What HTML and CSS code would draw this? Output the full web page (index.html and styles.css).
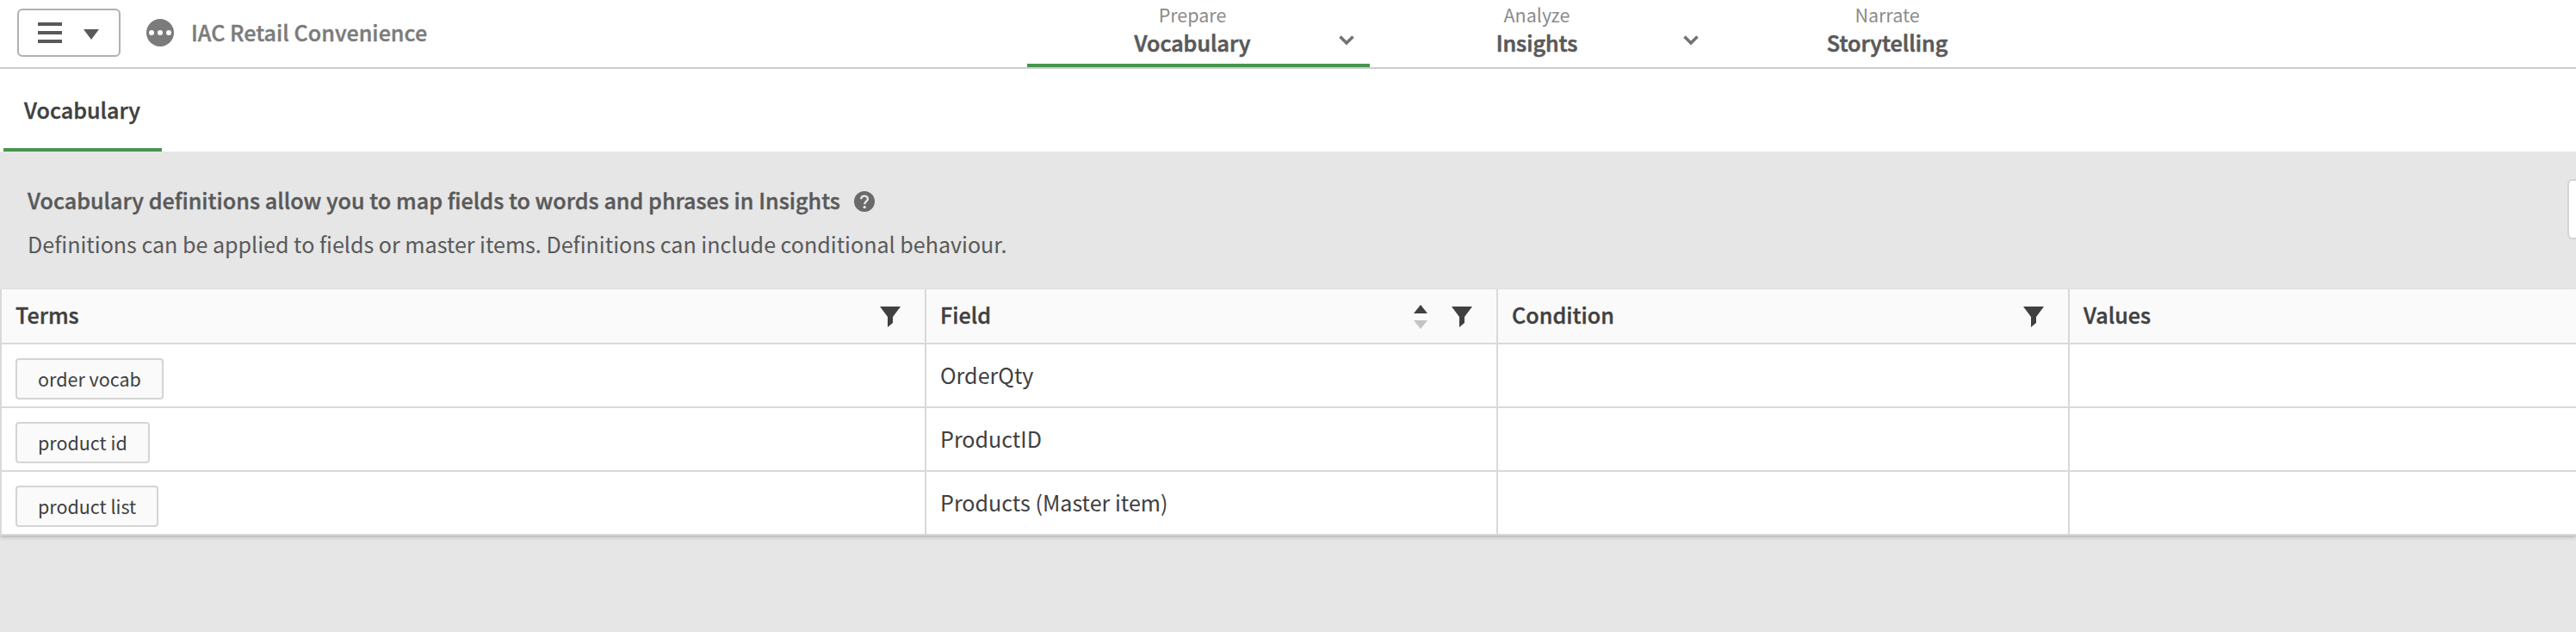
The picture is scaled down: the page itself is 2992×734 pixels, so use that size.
FILE: index.html
```html
<!DOCTYPE html>
<html lang="en">
<head>
    <meta charset="UTF-8">
    <meta name="viewport" content="width=device-width, initial-scale=1.0">
    <title>IAC Retail Convenience - Vocabulary</title>
    <link rel="stylesheet" href="styles.css">
</head>
<body>
    <header class="toolbar">
        <div class="app">
            <button type="button" class="menu-button" aria-label="Menu">
                <svg width="28" height="24" viewBox="0 0 28 24"><path d="M0 0h28v4H0zM0 10h28v4H0zM0 20h28v4H0z"/></svg>
                <svg class="caret" width="18" height="12" viewBox="0 0 18 12"><path d="M0 0h18L9 12z"/></svg>
            </button>
            <svg class="more" width="32" height="32" viewBox="0 0 32 32">
                <circle cx="16" cy="16" r="16" fill="#7b7b7b"/>
                <g fill="#fff"><circle cx="6" cy="16" r="3"/><circle cx="16" cy="16" r="3"/><circle cx="26" cy="16" r="3"/></g>
            </svg>
            <span class="app-name">IAC Retail Convenience</span>
        </div>
        <nav class="nav">
            <a class="nav-item active">
                <span class="nav-text"><small>Prepare</small><b>Vocabulary</b></span>
                <svg class="chevron" width="18" height="12" viewBox="0 0 18 12"><path d="M1.5 1.5L9 9l7.5-7.5"/></svg>
            </a>
            <a class="nav-item">
                <span class="nav-text"><small>Analyze</small><b>Insights</b></span>
                <svg class="chevron" width="18" height="12" viewBox="0 0 18 12"><path d="M1.5 1.5L9 9l7.5-7.5"/></svg>
            </a>
            <a class="nav-item">
                <span class="nav-text"><small>Narrate</small><b>Storytelling</b></span>
            </a>
        </nav>
    </header>

    <div class="tabs">
        <a class="tab">Vocabulary</a>
    </div>

    <section class="intro">
        <div class="intro-text">
            <h1>Vocabulary definitions allow you to map fields to words and phrases in Insights
                <svg class="help" width="24" height="24" viewBox="0 0 24 24">
                    <circle cx="12" cy="12" r="12" fill="#6a6a6a"/>
                    <path d="M8.2 9.3C8.2 4.4 15.9 4.4 15.9 9c0 2.900-3.700 2.900-3.700 6.200" fill="none" stroke="#e6e6e6" stroke-width="2.4"/>
                    <circle cx="12.2" cy="18.6" r="1.7" fill="#e6e6e6"/>
                </svg>
            </h1>
            <p>Definitions can be applied to fields or master items. Definitions can include conditional behaviour.</p>
        </div>
        <button type="button" class="create-button" aria-label="Create"></button>
    </section>

    <div class="grid">
        <div class="row head">
            <div class="cell">
                <span class="label">Terms</span>
                <svg class="filter" width="24" height="24" viewBox="0 0 24 24"><path d="M0 0h24l-9 12v7l-6 5V12z"/></svg>
            </div>
            <div class="cell">
                <span class="label">Field</span>
                <svg class="sort" width="16" height="28" viewBox="0 0 16 28"><path d="M0 10L8 0l8 10z" fill="#404040"/><path d="M0 18h16l-8 10z" fill="#c4c4c4"/></svg>
                <svg class="filter" width="24" height="24" viewBox="0 0 24 24"><path d="M0 0h24l-9 12v7l-6 5V12z"/></svg>
            </div>
            <div class="cell">
                <span class="label">Condition</span>
                <svg class="filter" width="24" height="24" viewBox="0 0 24 24"><path d="M0 0h24l-9 12v7l-6 5V12z"/></svg>
            </div>
            <div class="cell"><span class="label">Values</span></div>
        </div>
        <div class="row">
            <div class="cell"><span class="term">order vocab</span></div>
            <div class="cell">OrderQty</div>
            <div class="cell"></div>
            <div class="cell"></div>
        </div>
        <div class="row">
            <div class="cell"><span class="term">product id</span></div>
            <div class="cell">ProductID</div>
            <div class="cell"></div>
            <div class="cell"></div>
        </div>
        <div class="row">
            <div class="cell"><span class="term">product list</span></div>
            <div class="cell">Products (Master item)</div>
            <div class="cell"></div>
            <div class="cell"></div>
        </div>
    </div>
</body>
</html>
```
FILE: styles.css
```css
* {
    box-sizing: border-box;
}
body {
    margin: 0;
    height: 734px;
    overflow: hidden;
    background-color: #e6e6e6;
    color: #404040;
    font-family: "Source Sans Pro", "Noto Sans CJK SC", sans-serif;
    font-size: 25.1px;
    line-height: 36px;
}
svg {
    display: block;
    flex: none;
}
button {
    background-color: #fff;
    padding: 0;
}
.app-name, .nav-text b, .tab, .intro h1, .head {
    font-weight: 500;
    letter-spacing: 0.03px;
    -webkit-text-stroke: 0.4px;
}
.toolbar {
    display: flex;
    height: 80px;
    background-color: #fff;
    border-bottom: 2px solid #ccc;
}
.app {
    display: flex;
    align-items: flex-start;
    width: 1192px;
    padding: 10px 0 0 20px;
}
.menu-button {
    display: flex;
    gap: 25px;
    width: 120px;
    height: 56px;
    padding: 14px 0 0 22px;
    border: 2px solid #b0b0b0;
    border-radius: 6px;
    fill: #595959;
}
.caret {
    margin-top: 8px;
}
.more {
    margin: 12px 20px 0 30px;
}
.app-name {
    margin-top: 9px;
    color: #7b7b7b;
}
.nav {
    display: flex;
}
.nav-item {
    display: flex;
    width: 400px;
    height: 78px;
}
.nav-item.active {
    background: linear-gradient(#46964f, #46964f) 1px 74px / 398px 4px no-repeat;
}
.nav-text {
    display: flex;
    flex-direction: column;
    flex: 1;
    text-align: center;
}
.nav-text small {
    margin-top: 2px;
    color: #8c8c8c;
    font-size: 21.5px;
    line-height: 30px;
}
.nav-text b {
    margin-top: -1px;
    color: #595959;
    -webkit-text-stroke: 0.7px;
}
.chevron {
    margin: 41px 19px 0 -23px;
    fill: none;
    stroke: #737373;
    stroke-width: 3.6;
}
.tabs {
    height: 96px;
    padding-left: 4px;
    background-color: #fff;
}
.tab {
    display: block;
    width: 184px;
    height: 96px;
    padding: 29px 0 0 24px;
    border-bottom: 4px solid #46964f;
}
.intro {
    display: flex;
    height: 160px;
    color: #595959;
}
.intro-text {
    flex: 1;
    padding: 38px 0 0 32px;
}
.intro h1 {
    display: flex;
    align-items: center;
    gap: 16px;
    margin: 0 0 15px;
    font-size: 25.1px;
}
.help {
    margin-top: 4px;
}
.intro p {
    margin: 0;
    letter-spacing: -0.02px;
}
.create-button {
    width: 10px;
    height: 70px;
    margin-top: 32px;
    border: 2px solid #d4d4d4;
    border-right: none;
    border-radius: 6px 0 0 6px;
}
.grid {
    border-left: 2px solid #d9d9d9;
    box-shadow: 0 2px 4px rgba(0, 0, 0, 0.22);
}
.row {
    display: grid;
    grid-template-columns: 1074px 664px 664px 1fr;
    height: 74px;
    background-color: #fff;
    border-bottom: 2px solid #d9d9d9;
}
.cell {
    display: flex;
    align-items: flex-start;
    padding: 17px 28px 0 16px;
    border-right: 2px solid #d9d9d9;
}
.cell:last-child {
    border-right: none;
}
.head {
    height: 64px;
    background-color: #fafafa;
}
.head .cell {
    padding-top: 11px;
}
.label {
    flex: 1;
}
.filter {
    margin-top: 9px;
    fill: #404040;
}
.sort {
    margin: 7px 28px 0 0;
}
.term {
    height: 48px;
    margin-top: -1px;
    padding: 0 24px;
    background-color: #fafafa;
    border: 2px solid #d4d4d4;
    border-radius: 4px;
    font-size: 21.5px;
    line-height: 43px;
}
```
